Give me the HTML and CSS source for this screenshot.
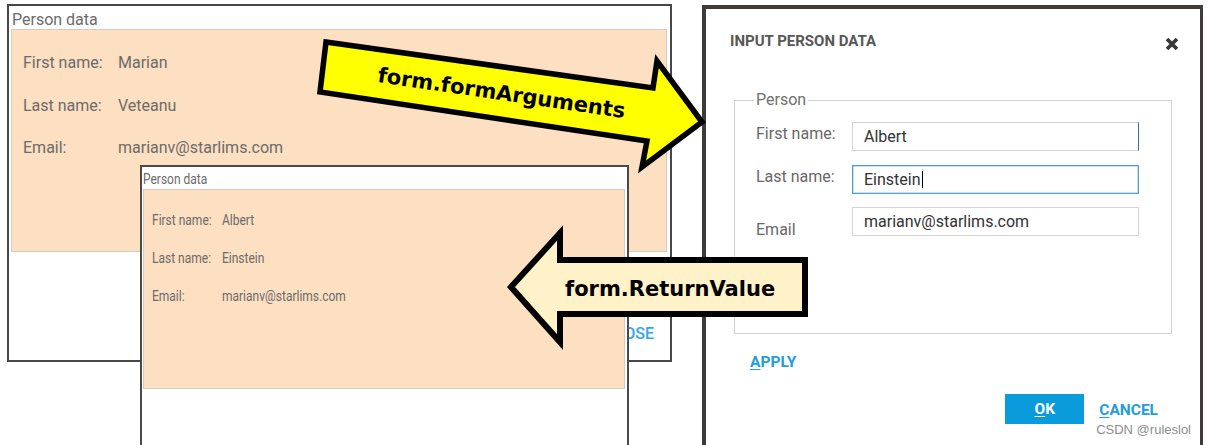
FILE: index.html
```html
<!DOCTYPE html>
<html lang="en">
<head>
<meta charset="utf-8">
<title>Person data</title>
<link rel="stylesheet" href="styles.css">
</head>
<body>
<div class="win win-back">
  <div class="win-title">Person data</div>
  <div class="sheet">
    <div class="fields">
      <span>First name:</span><span>Marian</span>
      <span>Last name:</span><span>Veteanu</span>
      <span>Email:</span><span>marianv@starlims.com</span>
    </div>
  </div>
  <div class="win-foot"><span class="close-btn">CLOSE</span></div>
</div>

<div class="win win-front">
  <div class="win-title"><span class="narrow">Person data</span></div>
  <div class="sheet">
    <div class="fields">
      <span>First name:</span><span>Albert</span>
      <span>Last name:</span><span>Einstein</span>
      <span>Email:</span><span>marianv@starlims.com</span>
    </div>
  </div>
</div>

<div class="dialog">
  <div class="dlg-head">
    <div class="dlg-title">INPUT PERSON DATA</div>
    <svg class="dlg-x" width="14" height="14" viewBox="0 0 14 14"><path d="M2 2 L12 12 M12 2 L2 12" stroke="#3a3a3a" stroke-width="3.8" stroke-linecap="butt"/></svg>
  </div>
  <fieldset class="group">
    <legend>Person</legend>
    <div class="form-grid">
      <span class="lbl">First name:</span><div class="field edge">Albert</div>
      <span class="lbl">Last name:</span><div class="field focus">Einstein<span class="caret"></span></div>
      <span class="lbl lbl-low">Email</span><div class="field">marianv@starlims.com</div>
    </div>
  </fieldset>
  <div class="apply"><u>A</u>PPLY</div>
  <div class="actions">
    <span class="btn-ok"><u>O</u>K</span>
    <span class="btn-link"><u>C</u>ANCEL</span>
  </div>
</div>

<svg class="arrows" width="1207" height="445" viewBox="0 0 1207 445">
  <polygon points="326,42 653,88 657,61 702,122 642,167 647,141 320,92" fill="#ffff00" stroke="#000" stroke-width="5.5" stroke-linejoin="miter"/>
  <text class="arrow-text" x="377" y="82" transform="rotate(8.3 377 82)">form.formArguments</text>
  <polygon points="511,287 560,233 560,260 805,260 805,314 560,314 560,342" fill="#fff2c9" stroke="#000" stroke-width="6" stroke-linejoin="miter"/>
  <text class="arrow-text" x="565" y="296">form.ReturnValue</text>
</svg>

<div class="watermark">CSDN @ruleslol</div>
</body>
</html>
```

FILE: styles.css
```css
html, body {
  margin: 0;
  padding: 0;
}
body {
  width: 1207px;
  height: 445px;
  position: relative;
  overflow: hidden;
  background: #ffffff;
  font-family: Roboto, "Noto Sans", Arial, sans-serif;
}

/* windows (collage on a free canvas) */
.win {
  position: absolute;
  box-sizing: border-box;
  border: 2px solid #474747;
  background: #ffffff;
  display: flex;
  flex-direction: column;
  color: #6b6b6b;
}
.win-back {
  left: 7px;
  top: 4px;
  width: 665px;
  height: 358px;
}
.win-back .win-title {
  font-size: 16px;
  height: 23px;
  line-height: 27px;
  padding-left: 3px;
}
.win-back .sheet {
  margin: 0 3px 0 2px;
  height: 223px;
  padding: 12px 0 0 11px;
}
.win-back .fields {
  display: grid;
  grid-template-columns: 95px auto;
  font-size: 16px;
  line-height: 42.5px;
}
.sheet {
  box-sizing: border-box;
  border: 1px solid #d4cbc1;
  background: #fddfc1;
}
.win-foot {
  display: flex;
  justify-content: flex-end;
  padding: 72px 16px 0 0;
}
.close-btn {
  font-size: 16px;
  line-height: 19px;
  font-weight: 500;
  color: #35a6ea;
}

.win-front {
  left: 140px;
  top: 165px;
  width: 489px;
  height: 300px;
  border-color: #4a4a4a;
}
.win-front .win-title {
  font-size: 15px;
  height: 22px;
  line-height: 24px;
  padding-left: 1px;
}
.narrow {
  display: inline-block;
  transform: scaleX(0.8);
  transform-origin: left center;
}
.win-front .sheet {
  margin: 0 2px 0 1px;
  height: 200px;
  padding: 10.5px 0 0 8px;
}
.win-front .fields {
  display: grid;
  grid-template-columns: 87.5px auto;
  font-size: 15px;
  line-height: 38px;
  transform: scaleX(0.8);
  transform-origin: left top;
}

/* dialog */
.dialog {
  position: absolute;
  left: 702px;
  top: 5px;
  width: 501px;
  height: 460px;
  box-sizing: border-box;
  border: 4px solid #3e3b39;
  border-right-width: 3px;
  background: #ffffff;
}
.dlg-head {
  height: 81px;
  box-sizing: border-box;
  padding: 23px 21px 0 24px;
  display: flex;
  justify-content: space-between;
  align-items: flex-start;
}
.dlg-title {
  font-size: 15px;
  line-height: 18px;
  font-weight: 700;
  color: #575757;
}
.dlg-x {
  margin-top: 5px;
  display: block;
}
.group {
  margin: 0 28px;
  padding: 0 0 94px 21px;
  border: 1px solid #d3d3d3;
  min-width: 0;
}
.group legend {
  margin-left: -2px;
  padding: 0 2px;
  font-size: 16px;
  line-height: 20px;
  color: #707070;
}
.form-grid {
  margin-top: 12px;
  display: grid;
  grid-template-columns: 96px 287px;
  row-gap: 13.5px;
}
.lbl {
  font-size: 16px;
  line-height: 19px;
  padding-top: 2px;
  color: #686868;
}
.lbl-low {
  padding-top: 13px;
}
.field {
  height: 29px;
  box-sizing: border-box;
  border: 1px solid #d4d4d4;
  padding: 0 0 0 11px;
  font-size: 16px;
  line-height: 27px;
  color: #333333;
  white-space: nowrap;
}
.field.edge {
  border-right-color: #2c72a3;
}
.field.focus {
  border-color: #4d9fcc;
  box-shadow: inset 0 0 0 0.5px rgba(77, 159, 204, 0.6);
}
.caret {
  display: inline-block;
  width: 1.5px;
  height: 17px;
  background: #000000;
  vertical-align: -3px;
  margin-left: 1px;
}
.apply {
  margin: 19px 0 0 44px;
  font-size: 15.5px;
  line-height: 18px;
  font-weight: 700;
  color: #1f9ddd;
}
.actions {
  margin-top: 23px;
  display: flex;
  justify-content: flex-end;
  align-items: center;
  gap: 15px;
  padding-right: 42px;
}
.btn-ok {
  width: 79px;
  height: 30px;
  display: flex;
  align-items: center;
  justify-content: center;
  background: #0a9bdc;
  color: #ffffff;
  font-size: 15.5px;
  font-weight: 700;
}
.btn-link {
  font-size: 15.5px;
  font-weight: 700;
  color: #1f9ddd;
  padding-top: 2px;
}
u {
  text-decoration-thickness: 1px;
  text-underline-offset: 2px;
}

/* arrows overlay */
.arrows {
  position: absolute;
  left: 0;
  top: 0;
  pointer-events: none;
}
.arrow-text {
  font-family: "DejaVu Sans", Verdana, sans-serif;
  font-weight: 700;
  font-size: 21px;
  fill: #000000;
}

.watermark {
  position: absolute;
  right: 16px;
  top: 422px;
  font-family: "Liberation Sans", Arial, sans-serif;
  font-size: 13px;
  line-height: 16px;
  color: #8d8d8d;
}
```
